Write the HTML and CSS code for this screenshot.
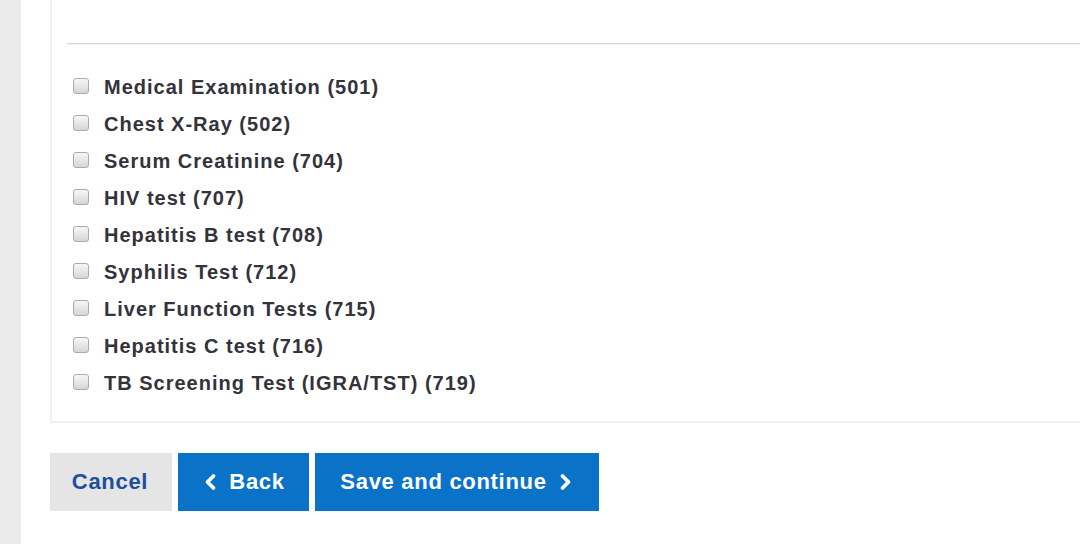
FILE: index.html
```html
<!DOCTYPE html>
<html>
<head>
<meta charset="utf-8">
<link rel="stylesheet" href="styles.css">
</head>
<body>
<div class="page">
  <div class="rail"></div>
  <main class="main">
    <section class="panel">
      <div class="rule"></div>
      <ul class="checks">
        <li><label><input type="checkbox"><span class="box"></span><span>Medical Examination (501)</span></label></li>
        <li><label><input type="checkbox"><span class="box"></span><span>Chest X-Ray (502)</span></label></li>
        <li><label><input type="checkbox"><span class="box"></span><span>Serum Creatinine (704)</span></label></li>
        <li><label><input type="checkbox"><span class="box"></span><span>HIV test (707)</span></label></li>
        <li><label><input type="checkbox"><span class="box"></span><span>Hepatitis B test (708)</span></label></li>
        <li><label><input type="checkbox"><span class="box"></span><span>Syphilis Test (712)</span></label></li>
        <li><label><input type="checkbox"><span class="box"></span><span>Liver Function Tests (715)</span></label></li>
        <li><label><input type="checkbox"><span class="box"></span><span>Hepatitis C test (716)</span></label></li>
        <li><label><input type="checkbox"><span class="box"></span><span>TB Screening Test (IGRA/TST) (719)</span></label></li>
      </ul>
    </section>
    <div class="actions">
      <button class="btn btn-cancel" type="button">Cancel</button>
      <button class="btn btn-primary btn-back" type="button">
        <svg class="chev" width="13" height="18" viewBox="0 0 13 18"><polyline points="9.5,3 3.5,9 9.5,15" fill="none" stroke="#fff" stroke-width="3.8" stroke-linecap="round" stroke-linejoin="round"/></svg>
        <span>Back</span>
      </button>
      <button class="btn btn-primary btn-save" type="button">
        <span>Save and continue</span>
        <svg class="chev" width="13" height="18" viewBox="0 0 13 18"><polyline points="3.5,3 9.5,9 3.5,15" fill="none" stroke="#fff" stroke-width="3.8" stroke-linecap="round" stroke-linejoin="round"/></svg>
      </button>
    </div>
  </main>
</div>
</body>
</html>
```

FILE: styles.css
```css
html, body {
  margin: 0;
  padding: 0;
  background: #ffffff;
}
body {
  font-family: "Liberation Sans", Arial, sans-serif;
  width: 1080px;
  height: 544px;
  overflow: hidden;
}
.page {
  display: flex;
  height: 544px;
}
.rail {
  width: 21px;
  flex: 0 0 21px;
  background: #ebebeb;
}
.main {
  flex: 1;
  padding-left: 29px;
  display: flex;
  flex-direction: column;
}
.panel {
  border-left: 2px solid #f1f1f1;
  border-bottom: 2px solid #efeff1;
  padding-left: 15px;
  height: 423px;
  box-sizing: border-box;
}
.rule {
  margin-top: 43px;
  height: 1px;
  background: #d8d8d8;
  border-bottom: 1px solid #f0f0f0;
}
.checks {
  list-style: none;
  margin: 24px 0 0 0;
  padding: 0;
}
.checks li {
  height: 37px;
  display: flex;
  align-items: center;
}
.checks label {
  display: flex;
  align-items: center;
  font-size: 20px;
  font-weight: bold;
  color: #34323b;
  letter-spacing: 1px;
}
.checks input {
  display: none;
}
.box {
  display: block;
  flex: 0 0 auto;
  width: 16px;
  height: 16px;
  margin-left: 6px;
  margin-right: 15px;
  border: 1px solid #ababab;
  border-radius: 3px;
  background: linear-gradient(#f7f7f7, #d6d6d6);
  box-sizing: border-box;
  position: relative;
  top: -2px;
}
.actions {
  display: flex;
  gap: 6px;
  margin-top: 30px;
}
.btn {
  height: 58px;
  border: none;
  margin: 0;
  font-family: "Liberation Sans", Arial, sans-serif;
  font-weight: bold;
  font-size: 22px;
  letter-spacing: 0.7px;
  display: flex;
  align-items: center;
  justify-content: center;
  gap: 12px;
  padding: 0;
  box-sizing: border-box;
}
.btn-cancel {
  width: 122px;
  background: #e5e5e5;
  color: #1d4f9e;
  padding-right: 2px;
}
.btn-primary {
  background: #0a73c8;
  color: #ffffff;
}
.btn-back {
  width: 131px;
  padding-left: 2px;
}
.btn-save {
  width: 284px;
  padding-right: 2px;
}
```
